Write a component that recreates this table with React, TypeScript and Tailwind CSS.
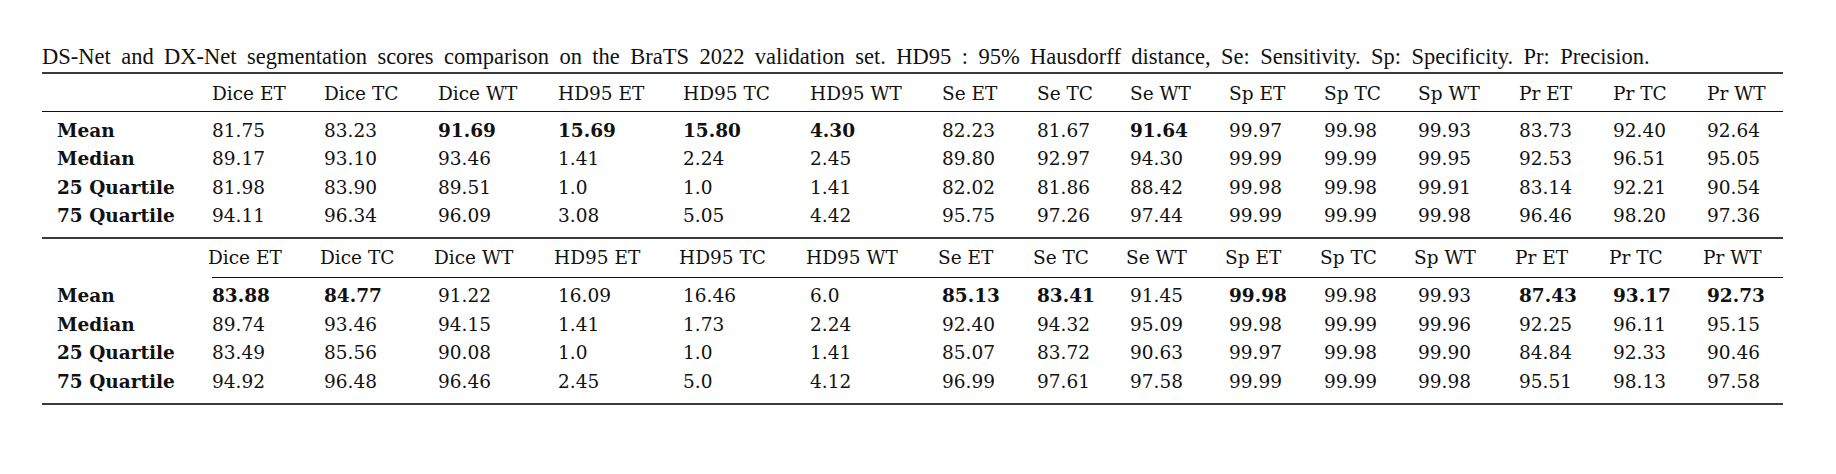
const HEADERS = [
  "Dice ET", "Dice TC", "Dice WT", "HD95 ET", "HD95 TC", "HD95 WT",
  "Se ET", "Se TC", "Se WT", "Sp ET", "Sp TC", "Sp WT", "Pr ET", "Pr TC", "Pr WT",
];

// a leading "*" marks a bold score
const DS_NET: [string, string[]][] = [
  ["Mean", ["81.75", "83.23", "*91.69", "*15.69", "*15.80", "*4.30", "82.23", "81.67", "*91.64", "99.97", "99.98", "99.93", "83.73", "92.40", "92.64"]],
  ["Median", ["89.17", "93.10", "93.46", "1.41", "2.24", "2.45", "89.80", "92.97", "94.30", "99.99", "99.99", "99.95", "92.53", "96.51", "95.05"]],
  ["25 Quartile", ["81.98", "83.90", "89.51", "1.0", "1.0", "1.41", "82.02", "81.86", "88.42", "99.98", "99.98", "99.91", "83.14", "92.21", "90.54"]],
  ["75 Quartile", ["94.11", "96.34", "96.09", "3.08", "5.05", "4.42", "95.75", "97.26", "97.44", "99.99", "99.99", "99.98", "96.46", "98.20", "97.36"]],
];

const DX_NET: [string, string[]][] = [
  ["Mean", ["*83.88", "*84.77", "91.22", "16.09", "16.46", "6.0", "*85.13", "*83.41", "91.45", "*99.98", "99.98", "99.93", "*87.43", "*93.17", "*92.73"]],
  ["Median", ["89.74", "93.46", "94.15", "1.41", "1.73", "2.24", "92.40", "94.32", "95.09", "99.98", "99.99", "99.96", "92.25", "96.11", "95.15"]],
  ["25 Quartile", ["83.49", "85.56", "90.08", "1.0", "1.0", "1.41", "85.07", "83.72", "90.63", "99.97", "99.98", "99.90", "84.84", "92.33", "90.46"]],
  ["75 Quartile", ["94.92", "96.48", "96.46", "2.45", "5.0", "4.12", "96.99", "97.61", "97.58", "99.99", "99.99", "99.98", "95.51", "98.13", "97.58"]],
];

const GRID =
  "grid grid-cols-[170px_112px_114px_120px_125px_127px_132px_95px_93px_99px_95px_94px_101px_94px_94px_76px]";

function Cell({ v }: { v: string }) {
  const bold = v.startsWith("*");
  return <div className={bold ? "font-bold" : ""}>{bold ? v.slice(1) : v}</div>;
}

function Body({ rows }: { rows: [string, string[]][] }) {
  return (
    <div className={`${GRID} leading-[28.5px]`}>
      {rows.map(([label, vals]) => (
        <div key={label} className="contents">
          <div className="pl-[15px] font-bold">{label}</div>
          {vals.map((v, i) => (
            <Cell key={i} v={v} />
          ))}
        </div>
      ))}
    </div>
  );
}

export default function App() {
  return (
    <div className="w-[1836px] h-[474px] bg-white text-[#111] pt-[43px]">
      <div className="ml-[42px] w-[1741px]">
        <p className="font-['Liberation_Serif',serif] text-[22.5px] leading-[28px] whitespace-nowrap [word-spacing:4.8px] mb-[1px]">
          DS-Net and DX-Net segmentation scores comparison on the BraTS 2022 validation set. HD95 : 95% Hausdorff distance, Se: Sensitivity. Sp: Specificity. Pr: Precision.
        </p>
        <div className="font-['DejaVu_Serif',serif] text-[18.5px]">
          <div className="h-[2px] bg-[#3a3a3a]" />
          <div className={`${GRID} leading-[28px] pt-[6px] pb-[3px]`}>
            <div />
            {HEADERS.map((h) => (
              <div key={h}>{h}</div>
            ))}
          </div>
          <div className="h-px bg-[#111]" />
          <div className="pt-[4.5px] pb-[6px]">
            <Body rows={DS_NET} />
          </div>
          <div className="h-[2px] bg-[#3a3a3a]" />
          <div className={`${GRID} leading-[28px] pt-[5.5px] pb-[5px]`}>
            <div />
            {HEADERS.map((h) => (
              <div key={h} className="-ml-1">{h}</div>
            ))}
          </div>
          <div className="ml-[170px] h-px bg-[#111]" />
          <div className="pt-[4px] pb-[7px]">
            <Body rows={DX_NET} />
          </div>
          <div className="h-[2px] bg-[#3a3a3a]" />
        </div>
      </div>
    </div>
  );
}
